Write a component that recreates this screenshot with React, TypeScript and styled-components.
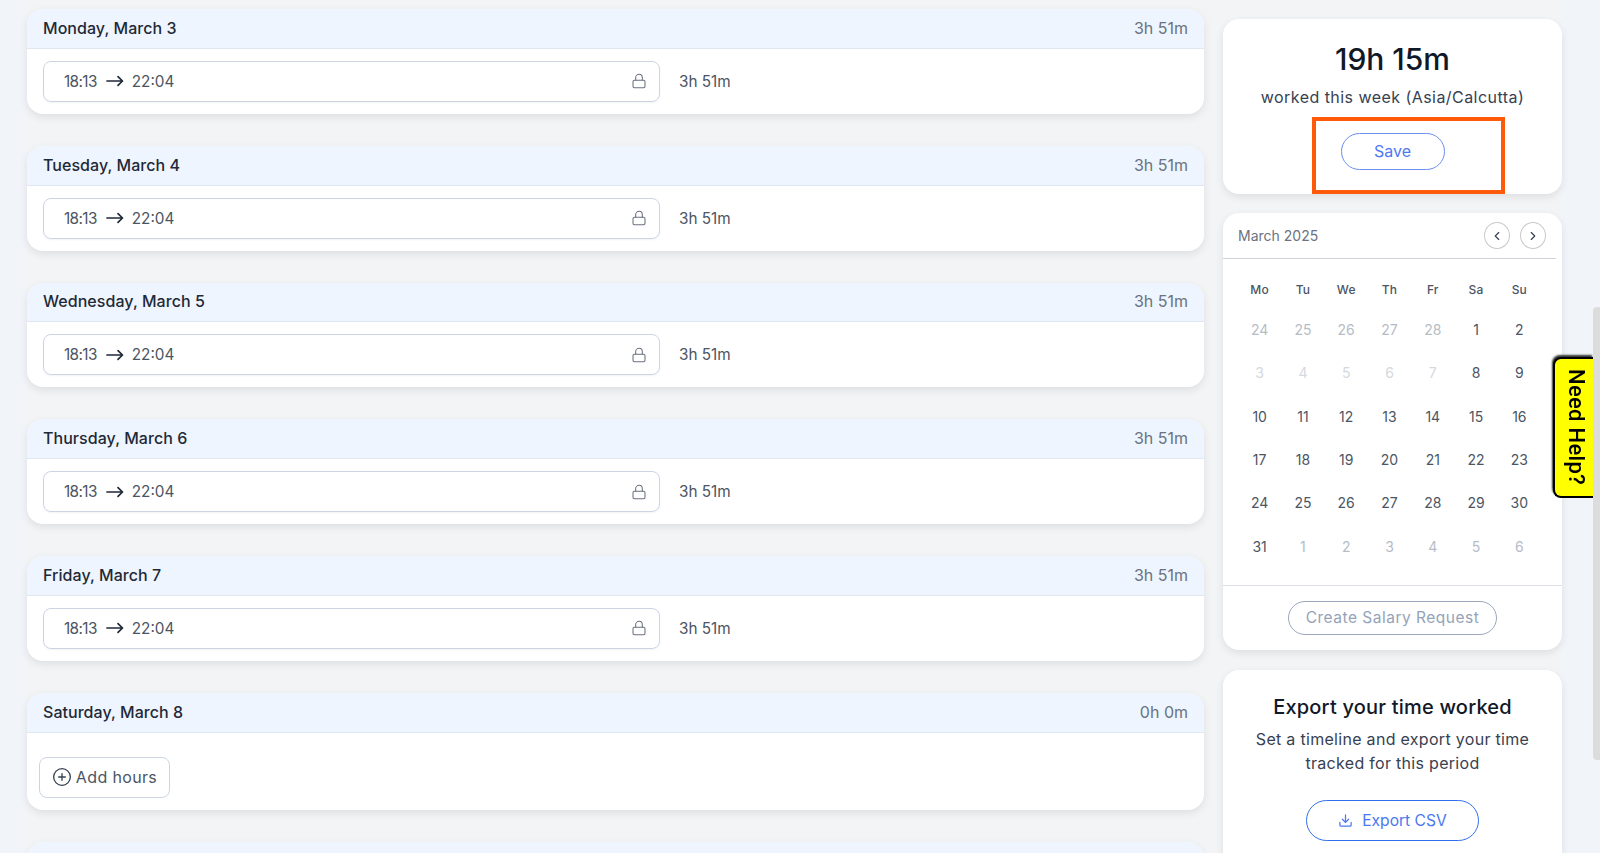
import { ChevronLeft, ChevronRight, CirclePlus, Download, Lock } from "lucide-react";
import styled, { createGlobalStyle } from "styled-components";

const FONT = `Inter, "Open Sans", "Liberation Sans", sans-serif`;

const GlobalStyle = createGlobalStyle`
  html, body {
    margin: 0;
    height: 100%;
    overflow: hidden;
    background: #f1f5f9;
    font-family: ${FONT};
  }
  * {
    box-sizing: border-box;
  }
`;

const Page = styled.div`
  width: 1600px;
  height: 853px;
  padding-left: 27px;
  overflow: hidden;
`;

const Content = styled.main`
  width: 1535px;
  height: 853px;
  display: flex;
  gap: 19px;
  background: #f3f4f6;
`;

const Days = styled.section`
  width: 1177px;
  flex-shrink: 0;
  padding-top: 9px;
  display: flex;
  flex-direction: column;
  gap: 32px;
`;

const Card = styled.article`
  background: #fff;
  border-radius: 16px;
  overflow: hidden;
  flex-shrink: 0;
  box-shadow: 0 3px 8px rgba(0, 0, 0, 0.09);
`;

const DayHeader = styled.header`
  height: 39.8px;
  padding: 0 16px 1px;
  display: flex;
  align-items: center;
  justify-content: space-between;
  background: #eef5fe;
  border-bottom: 1px solid #dfe7f3;
`;

const DayName = styled.span`
  font-size: 16px;
  font-weight: 500;
  letter-spacing: 0.05px;
  color: #1f2937;
`;

const DayTotal = styled.span`
  font-size: 16px;
  color: #6b7280;
`;

const DayBody = styled.div`
  padding: 12px 16px;
  display: flex;
  align-items: center;
  gap: 19px;
`;

const TimeField = styled.div`
  width: 617px;
  height: 41px;
  padding: 0 12px 0 20px;
  display: flex;
  align-items: center;
  border: 1px solid #cbd5e1;
  border-radius: 8px;
  font-size: 15.3px;
  color: #4b5563;
  box-shadow: 0 1px 2px rgba(0, 0, 0, 0.05);
`;

const StartTime = styled.span`
  letter-spacing: -0.6px;
`;

const ArrowMark = styled.svg`
  width: 18px;
  height: 12px;
  margin: 0 8px 0 9px;
  fill: none;
  stroke: #1f2937;
  stroke-width: 1.7;
  stroke-linecap: round;
  stroke-linejoin: round;
`;

const LockIcon = styled(Lock)`
  margin-left: auto;
  color: #6b7280;
`;

const RowTotal = styled.span`
  font-size: 15.3px;
  color: #4b5563;
`;

const AddBody = styled.div`
  height: 77px;
  padding: 24px 12px 12px;
`;

const AddButton = styled.button`
  width: 131px;
  height: 41px;
  padding: 0;
  display: flex;
  align-items: center;
  justify-content: center;
  gap: 4px;
  background: #fff;
  border: 1px solid #cbd5e1;
  border-radius: 8px;
  font: 400 16px ${FONT};
  letter-spacing: 0.35px;
  color: #4b5563;
`;

const Sidebar = styled.aside`
  width: 339px;
  flex-shrink: 0;
  padding-top: 19px;
  display: flex;
  flex-direction: column;
  gap: 19px;
`;

const TotalCard = styled(Card)`
  position: relative;
  height: 175px;
  padding-top: 22px;
  display: flex;
  flex-direction: column;
  align-items: center;
`;

const TotalHours = styled.h2`
  margin: 0;
  height: 36px;
  line-height: 36px;
  font-size: 30px;
  font-weight: 500;
  color: #111827;
`;

const TotalLabel = styled.p`
  margin: 10px 0 0;
  font-size: 16px;
  line-height: 20px;
  letter-spacing: 0.45px;
  color: #374151;
`;

const SaveButton = styled.button`
  width: 104px;
  height: 37px;
  margin-top: 26px;
  padding: 0 0 2px;
  background: #fff;
  border: 1px solid #6b8ff0;
  border-radius: 19px;
  font: 400 16px ${FONT};
  color: #5078f2;
`;

const Highlight = styled.div`
  position: absolute;
  left: 89px;
  top: 98px;
  width: 193px;
  height: 77px;
  border: 4px solid #ff5a0a;
`;

const CalendarCard = styled(Card)`
  height: 437px;
  display: flex;
  flex-direction: column;
`;

const CalendarHeader = styled.header`
  width: 333px;
  height: 46px;
  padding: 0 10px 0 15px;
  display: flex;
  align-items: center;
  gap: 10px;
  border-bottom: 1px solid #cfd2d6;
`;

const MonthTitle = styled.span`
  margin-right: auto;
  font-size: 14px;
  color: #6b7280;
`;

const NavButton = styled.button`
  width: 26px;
  height: 27px;
  padding: 0;
  display: flex;
  align-items: center;
  justify-content: center;
  background: #fff;
  border: 1px solid #c9c9c9;
  border-radius: 50%;
  color: #374151;
`;

const Grid = styled.div`
  width: 333px;
  height: 326px;
  padding: 12px 15px 0;
  display: grid;
  grid-template-columns: repeat(7, 1fr);
  grid-template-rows: 37px repeat(6, 43.3px);
  align-items: center;
  justify-items: center;
`;

const WeekDay = styled.span`
  font-size: 12px;
  font-weight: 500;
  letter-spacing: 0.2px;
  color: #4b5563;
`;

const DayCell = styled.span<{ $tone: "active" | "muted" | "faint" }>`
  font-size: 14px;
  color: ${(p) => (p.$tone === "active" ? "#4b5563" : p.$tone === "muted" ? "#b6bcc6" : "#d5d8de")};
`;

const CalendarFooter = styled.footer`
  flex: 1;
  display: flex;
  align-items: flex-start;
  justify-content: center;
  padding-top: 15px;
  border-top: 1px solid #dcdfe4;
`;

const SalaryButton = styled.button`
  width: 209px;
  height: 34px;
  padding: 0 0 2px;
  background: #fff;
  border: 1px solid #9aa7bd;
  border-radius: 17px;
  font: 400 15.5px ${FONT};
  letter-spacing: 0.5px;
  color: #94a3b8;
`;

const ExportCard = styled(Card)`
  height: 200px;
  margin-top: 1px;
  padding-top: 24px;
  display: flex;
  flex-direction: column;
  align-items: center;
  text-align: center;
`;

const ExportTitle = styled.h3`
  margin: 0;
  font-size: 20px;
  line-height: 26px;
  font-weight: 500;
  letter-spacing: 0.2px;
  color: #111827;
`;

const ExportText = styled.p`
  margin: 8px 0 0;
  width: 300px;
  font-size: 16px;
  line-height: 23.5px;
  letter-spacing: 0.3px;
  color: #374151;
`;

const ExportButton = styled.button`
  width: 173px;
  height: 41px;
  margin-top: 25px;
  padding: 0;
  display: flex;
  align-items: center;
  justify-content: center;
  gap: 9px;
  background: #fff;
  border: 1px solid #2f6fed;
  border-radius: 21px;
  font: 400 15.6px ${FONT};
  color: #4a78f0;
`;

const HelpTab = styled.div`
  position: fixed;
  left: 1553px;
  top: 357px;
  width: 40px;
  height: 141px;
  padding-left: 5px;
  display: flex;
  align-items: center;
  justify-content: center;
  writing-mode: vertical-rl;
  background: #ffff00;
  border: 2px solid #000;
  border-right: 0;
  border-radius: 8px 0 0 8px;
  box-shadow: -1px -2px 2px rgba(0, 0, 0, 0.8);
  font: 500 22px Roboto, "Liberation Sans", sans-serif;
  letter-spacing: 0.3px;
  color: #000;
`;

const ScrollThumb = styled.div`
  position: fixed;
  left: 1593px;
  top: 307px;
  width: 7px;
  height: 453px;
  background: #dcdcdc;
  border-radius: 4px 0 0 4px;
`;

const weekDays = ["Mo", "Tu", "We", "Th", "Fr", "Sa", "Su"];

type Tone = "active" | "muted" | "faint";
const calendar: [string, Tone][] = [
  ...["24", "25", "26", "27", "28"].map((d): [string, Tone] => [d, "muted"]),
  ...["1", "2"].map((d): [string, Tone] => [d, "active"]),
  ...["3", "4", "5", "6", "7"].map((d): [string, Tone] => [d, "faint"]),
  ...Array.from({ length: 24 }, (_, i): [string, Tone] => [String(i + 8), "active"]),
  ...["1", "2", "3", "4", "5", "6"].map((d): [string, Tone] => [d, "muted"]),
];

const workedDays = ["Monday, March 3", "Tuesday, March 4", "Wednesday, March 5", "Thursday, March 6", "Friday, March 7"];

const App = () => {
  return (
    <Page>
      <GlobalStyle />
      <Content>
        <Days>
          {workedDays.map((day) => (
            <Card key={day}>
              <DayHeader>
                <DayName>{day}</DayName>
                <DayTotal>3h 51m</DayTotal>
              </DayHeader>
              <DayBody>
                <TimeField>
                  <StartTime>18:13</StartTime>
                  <ArrowMark viewBox="0 0 18 12">
                    <path d="M1 6h15.5M12 1.7 16.5 6 12 10.3" />
                  </ArrowMark>
                  <span>22:04</span>
                  <LockIcon size={16} strokeWidth={1.6} />
                </TimeField>
                <RowTotal>3h 51m</RowTotal>
              </DayBody>
            </Card>
          ))}
          <Card>
            <DayHeader>
              <DayName>Saturday, March 8</DayName>
              <DayTotal>0h 0m</DayTotal>
            </DayHeader>
            <AddBody>
              <AddButton>
                <CirclePlus size={20} strokeWidth={1.6} color="#374151" />
                Add hours
              </AddButton>
            </AddBody>
          </Card>
          <Card>
            <DayHeader />
          </Card>
        </Days>
        <Sidebar>
          <TotalCard>
            <TotalHours>19h 15m</TotalHours>
            <TotalLabel>worked this week (Asia/Calcutta)</TotalLabel>
            <SaveButton>Save</SaveButton>
            <Highlight />
          </TotalCard>
          <CalendarCard>
            <CalendarHeader>
              <MonthTitle>March 2025</MonthTitle>
              <NavButton>
                <ChevronLeft size={14} strokeWidth={2} />
              </NavButton>
              <NavButton>
                <ChevronRight size={14} strokeWidth={2} />
              </NavButton>
            </CalendarHeader>
            <Grid>
              {weekDays.map((d) => (
                <WeekDay key={d}>{d}</WeekDay>
              ))}
              {calendar.map(([d, tone], i) => (
                <DayCell key={i} $tone={tone}>
                  {d}
                </DayCell>
              ))}
            </Grid>
            <CalendarFooter>
              <SalaryButton>Create Salary Request</SalaryButton>
            </CalendarFooter>
          </CalendarCard>
          <ExportCard>
            <ExportTitle>Export your time worked</ExportTitle>
            <ExportText>Set a timeline and export your time tracked for this period</ExportText>
            <ExportButton>
              <Download size={15} strokeWidth={2} />
              Export CSV
            </ExportButton>
          </ExportCard>
        </Sidebar>
      </Content>
      <HelpTab>Need Help?</HelpTab>
      <ScrollThumb />
    </Page>
  );
};

export default App;
